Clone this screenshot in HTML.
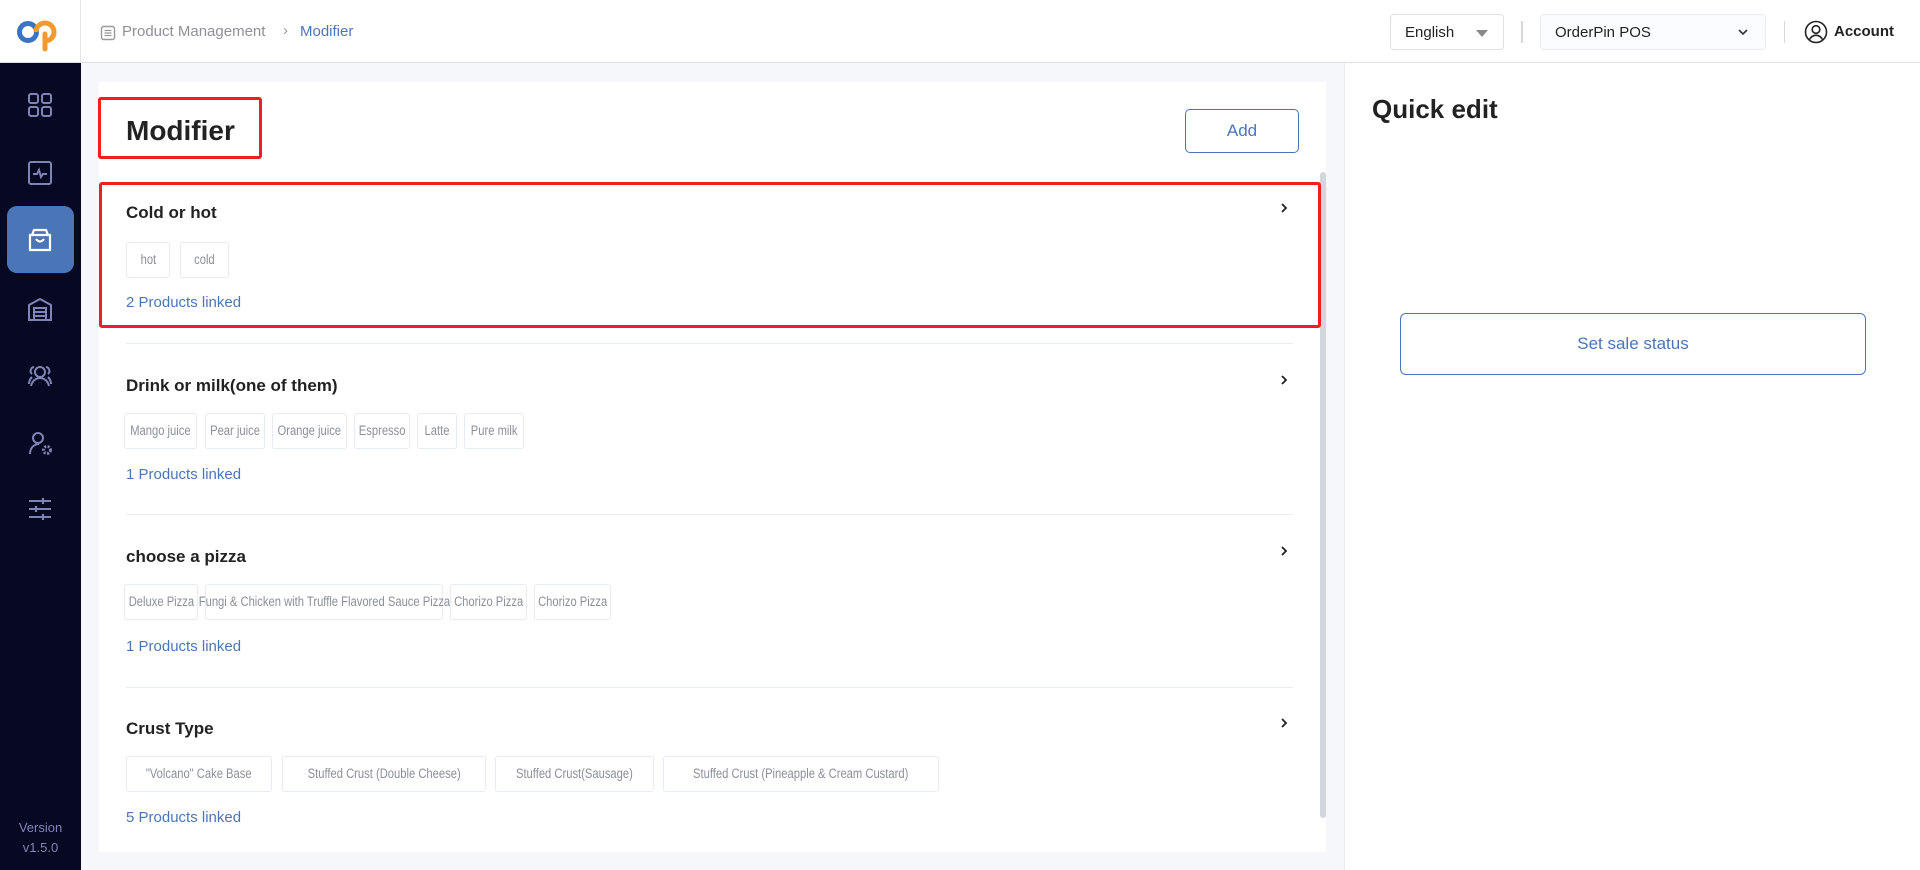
<!DOCTYPE html>
<html><head><meta charset="utf-8"><style>
*{box-sizing:border-box;margin:0;padding:0}
body{width:1920px;height:870px;overflow:hidden;background:#f5f7fa;font-family:"Liberation Sans",sans-serif;position:relative;color:#222}
.abs{position:absolute}
.side{left:0;top:63px;width:81px;height:807px;background:#070923}
.hdr{left:0;top:0;width:1920px;height:63px;background:#fff;border-bottom:1px solid #dcdfe6}
.logo{left:0;top:0;width:81px;height:63px;border-right:1px solid #e4e7ed}
.ic{left:26px;width:28px;height:28px}
.card{left:99px;top:82px;width:1227px;height:770px;background:#fff}
.rp{left:1344px;top:63px;width:576px;height:807px;background:#fff;border-left:1px solid #e9edf3}
.tag{position:absolute;height:36px;border:1px solid #e6ebf5;border-radius:3px;font-size:13.5px;color:#8a8f99;line-height:34px;white-space:nowrap;display:flex;justify-content:center}
.tag span{display:block;flex:none;transform:scaleX(.83);transform-origin:center}
.ttl{position:absolute;left:126px;font-size:17px;font-weight:bold;color:#222}
.lnk{position:absolute;left:126px;font-size:15px;color:#4a76b8}
.sep{position:absolute;left:126px;width:1167px;height:1px;background:#e8edf5}
.chev{position:absolute;left:1278px;width:12px;height:14px}
</style></head><body>
<div class="abs hdr"></div>
<div class="abs logo">
<svg width="81" height="63" viewBox="0 0 81 63"><circle cx="28" cy="32" r="8.5" fill="none" stroke="#3b73c5" stroke-width="5"/><path d="M36 32a9 9 0 1 1 9 9" fill="none" stroke="#f29a2e" stroke-width="5"/><path d="M45 34v15" stroke="#f29a2e" stroke-width="5" stroke-linecap="round"/></svg>
</div>
<svg class="abs" style="left:100px;top:25px" width="16" height="16" viewBox="0 0 16 16"><rect x="1.5" y="1.5" width="13" height="13" rx="2" fill="none" stroke="#999" stroke-width="1.4"/><path d="M4.5 5.5h7M4.5 8h7M4.5 10.5h7" stroke="#999" stroke-width="1.3"/></svg>
<div class="abs" style="left:122px;top:23px;font-size:15px;color:#8d9097">Product Management</div>
<div class="abs" style="left:283px;top:22px;font-size:15px;color:#999">›</div>
<div class="abs" style="left:300px;top:23px;font-size:15px;color:#4a76b8">Modifier</div>
<div class="abs" style="left:1390px;top:14px;width:114px;height:36px;border:1px solid #dcdfe6;border-radius:4px;background:#fff"></div>
<div class="abs" style="left:1405px;top:24px;font-size:15px;color:#222">English</div>
<div class="abs" style="left:1476px;top:30px;width:0;height:0;border-left:6px solid transparent;border-right:6px solid transparent;border-top:7px solid #888"></div>
<div class="abs" style="left:1521px;top:21px;width:2px;height:22px;background:#d5d8de"></div>
<div class="abs" style="left:1540px;top:14px;width:226px;height:36px;border:1px solid #e8edf5;border-radius:4px;background:#fbfcff"></div>
<div class="abs" style="left:1555px;top:24px;font-size:15px;color:#222">OrderPin POS</div>
<svg class="abs" style="left:1737px;top:28px" width="12" height="8" viewBox="0 0 12 8"><path d="M2 2l4 4 4-4" fill="none" stroke="#333" stroke-width="1.6"/></svg>
<div class="abs" style="left:1784px;top:21px;width:1px;height:22px;background:#d5d8de"></div>
<svg class="abs" style="left:1804px;top:20px" width="24" height="24" viewBox="0 0 24 24"><circle cx="12" cy="12" r="10.5" fill="none" stroke="#222" stroke-width="1.6"/><circle cx="12" cy="9.5" r="3.8" fill="none" stroke="#222" stroke-width="1.6"/><path d="M5.5 19.5c1.5-3 4-4.2 6.5-4.2s5 1.2 6.5 4.2" fill="none" stroke="#222" stroke-width="1.6"/></svg>
<div class="abs" style="left:1834px;top:23px;font-size:15px;font-weight:bold;color:#222">Account</div>

<div class="abs side"></div>
<div class="abs" style="left:7px;top:206px;width:67px;height:67px;background:#4a76b8;border-radius:10px"></div>
<svg class="abs ic" style="top:91px" viewBox="0 0 28 28" fill="none" stroke="#8084b4" stroke-width="2"><rect x="3" y="3" width="9" height="9" rx="2"/><rect x="16" y="3" width="9" height="9" rx="2"/><rect x="3" y="16" width="9" height="9" rx="2"/><rect x="16" y="16" width="9" height="9" rx="2"/></svg>
<svg class="abs ic" style="top:159px" viewBox="0 0 28 28" fill="none" stroke="#8084b4" stroke-width="2"><rect x="3" y="3" width="22" height="22" rx="2"/><path d="M7 15h4l2-4 2 7 2-3h4"/></svg>
<svg class="abs ic" style="top:226px" viewBox="0 0 28 28" fill="none" stroke="#fff" stroke-width="2.2"><path d="M4 9h20v15H4zM6 9l2-5h12l2 5M10 13q4 5 8 0"/></svg>
<svg class="abs ic" style="top:295px" viewBox="0 0 28 28" fill="none" stroke="#8084b4" stroke-width="2"><path d="M3 25V10l11-6 11 6v15zM8 13h12v12H8zM8 17h12M8 21h12"/></svg>
<svg class="abs ic" style="top:362px" viewBox="0 0 28 28" fill="none" stroke="#8084b4" stroke-width="2"><circle cx="14" cy="10" r="5"/><path d="M5 24c1-5 5-8 9-8s8 3 9 8M8 5a4 4 0 0 0-2 7M20 5a4 4 0 0 1 2 7M3 22c0-3 1-5 3-7M25 22c0-3-1-5-3-7"/></svg>
<svg class="abs ic" style="top:429px" viewBox="0 0 28 28" fill="none" stroke="#8084b4" stroke-width="2"><circle cx="12" cy="9" r="5"/><path d="M4 25c0-6 4-10 9-10"/><circle cx="21" cy="21" r="3.5" stroke-width="3" stroke-dasharray="2 1.4"/></svg>
<svg class="abs ic" style="top:495px" viewBox="0 0 28 28" fill="none" stroke="#8084b4" stroke-width="2"><path d="M3 6h22M3 14h22M3 22h22"/><path d="M17 3v6M10 11v6M17 19v6" stroke-width="2.2"/></svg>
<div class="abs" style="left:0;top:818px;width:81px;text-align:center;font-size:13px;color:#8084b4;line-height:20px">Version<br>v1.5.0</div>

<div class="abs card"></div>
<div class="abs" style="left:98px;top:97px;width:164px;height:62px;border:3px solid #f21d1d;border-radius:3px"></div>
<div class="abs" style="left:126px;top:115px;font-size:28px;font-weight:bold;color:#222">Modifier</div>
<div class="abs" style="left:1185px;top:109px;width:114px;height:44px;border:1px solid #4a76b8;border-radius:5px;text-align:center;line-height:42px;font-size:17px;color:#4a76b8">Add</div>
<div class="abs" style="left:1320px;top:172px;width:6px;height:646px;background:#d3d6dc;border-radius:3px"></div>
<div class="abs" style="left:99px;top:182px;width:1222px;height:146px;border:3px solid #f21d1d;border-radius:3px"></div>

<div class="ttl" style="top:203px">Cold or hot</div>
<svg class="chev" style="top:201px" viewBox="0 0 12 14"><path d="M4 3l4 4-4 4" fill="none" stroke="#222" stroke-width="1.8"/></svg>
<div class="tag" style="left:126px;top:242px;width:44px"><span>hot</span></div>
<div class="tag" style="left:180px;top:242px;width:49px"><span>cold</span></div>
<div class="lnk" style="top:294px">2 Products linked</div>
<div class="sep" style="top:343px"></div>

<div class="ttl" style="top:376px">Drink or milk(one of them)</div>
<svg class="chev" style="top:373px" viewBox="0 0 12 14"><path d="M4 3l4 4-4 4" fill="none" stroke="#222" stroke-width="1.8"/></svg>
<div class="tag" style="left:124px;top:413px;width:73px"><span>Mango juice</span></div>
<div class="tag" style="left:205px;top:413px;width:60px"><span>Pear juice</span></div>
<div class="tag" style="left:272px;top:413px;width:75px"><span>Orange juice</span></div>
<div class="tag" style="left:354px;top:413px;width:56px"><span>Espresso</span></div>
<div class="tag" style="left:417px;top:413px;width:40px"><span>Latte</span></div>
<div class="tag" style="left:464px;top:413px;width:60px"><span>Pure milk</span></div>
<div class="lnk" style="top:466px">1 Products linked</div>
<div class="sep" style="top:514px"></div>

<div class="ttl" style="top:547px">choose a pizza</div>
<svg class="chev" style="top:544px" viewBox="0 0 12 14"><path d="M4 3l4 4-4 4" fill="none" stroke="#222" stroke-width="1.8"/></svg>
<div class="tag" style="left:124px;top:584px;width:74px"><span>Deluxe Pizza</span></div>
<div class="tag" style="left:205px;top:584px;width:238px"><span>Fungi &amp; Chicken with Truffle Flavored Sauce Pizza</span></div>
<div class="tag" style="left:450px;top:584px;width:77px"><span>Chorizo Pizza</span></div>
<div class="tag" style="left:534px;top:584px;width:77px"><span>Chorizo Pizza</span></div>
<div class="lnk" style="top:638px">1 Products linked</div>
<div class="sep" style="top:687px"></div>

<div class="ttl" style="top:719px">Crust Type</div>
<svg class="chev" style="top:716px" viewBox="0 0 12 14"><path d="M4 3l4 4-4 4" fill="none" stroke="#222" stroke-width="1.8"/></svg>
<div class="tag" style="left:126px;top:756px;width:146px"><span>"Volcano" Cake Base</span></div>
<div class="tag" style="left:282px;top:756px;width:204px"><span>Stuffed Crust (Double Cheese)</span></div>
<div class="tag" style="left:495px;top:756px;width:159px"><span>Stuffed Crust(Sausage)</span></div>
<div class="tag" style="left:663px;top:756px;width:276px"><span>Stuffed Crust (Pineapple &amp; Cream Custard)</span></div>
<div class="lnk" style="top:809px">5 Products linked</div>

<div class="abs rp"></div>
<div class="abs" style="left:1372px;top:94px;font-size:26px;font-weight:bold;color:#222">Quick edit</div>
<div class="abs" style="left:1400px;top:313px;width:466px;height:62px;border:1px solid #4a76b8;border-radius:6px;text-align:center;line-height:60px;font-size:17px;color:#4a76b8">Set sale status</div>
</body></html>
